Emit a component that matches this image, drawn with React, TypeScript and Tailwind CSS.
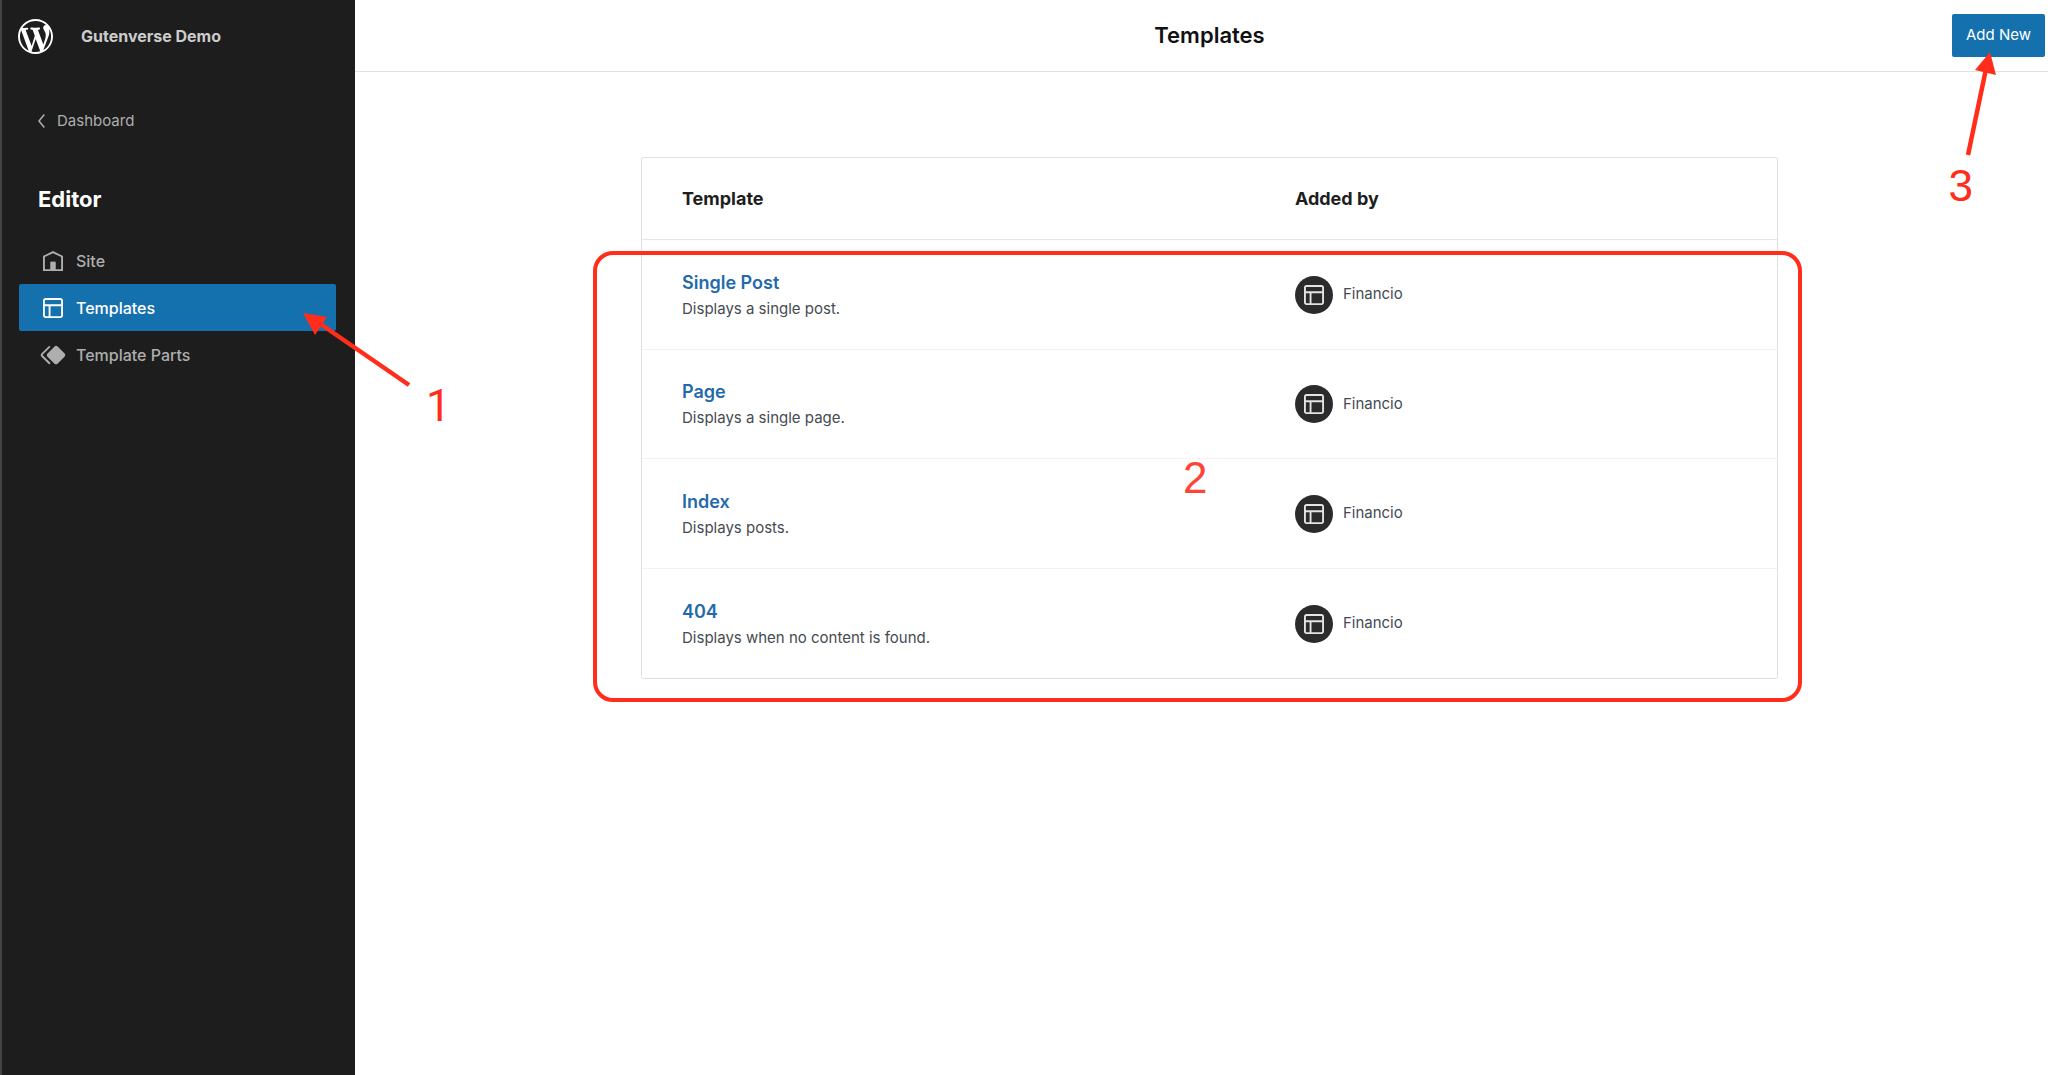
import type { ReactNode } from 'react';

const NAV_ITEMS = [
  { label: 'Site', icon: <HomeIcon />, active: false },
  { label: 'Templates', icon: <LayoutIcon />, active: true },
  { label: 'Template Parts', icon: <SymbolFilledIcon />, active: false },
];

const TEMPLATES = [
  { title: 'Single Post', description: 'Displays a single post.', addedBy: 'Financio' },
  { title: 'Page', description: 'Displays a single page.', addedBy: 'Financio' },
  { title: 'Index', description: 'Displays posts.', addedBy: 'Financio' },
  { title: '404', description: 'Displays when no content is found.', addedBy: 'Financio' },
];

function Icon({ children }: { children: ReactNode }) {
  return (
    <svg viewBox="0 0 24 24" className="w-[30px] h-[30px] shrink-0" fill="currentColor" aria-hidden="true">
      {children}
    </svg>
  );
}

function HomeIcon() {
  return (
    <Icon>
      <path d="M12 4L4 7.9V20h16V7.9L12 4zm6.5 14.5H14V13h-4v5.5H5.5V8.8L12 5.7l6.5 3.1v9.7z" />
      <path d="M10 12.5h4v6.5h-4z" />
    </Icon>
  );
}

function LayoutIcon() {
  return (
    <Icon>
      <path
        fillRule="evenodd"
        d="M18 4H6c-1.1 0-2 .9-2 2v12c0 1.1.9 2 2 2h12c1.1 0 2-.9 2-2V6c0-1.1-.9-2-2-2zM6 5.5h12c.3 0 .5.2.5.5v3h-13V6c0-.3.2-.5.5-.5zM5.5 10.5H8.5v8H6c-.3 0-.5-.2-.5-.5v-7.5zM10 18.5v-8h8.5V18c0 .3-.2.5-.5.5h-8z"
      />
    </Icon>
  );
}

function SymbolFilledIcon() {
  return (
    <Icon>
      <path d="M21.3 10.8l-5.6-5.6c-.7-.7-1.8-.7-2.5 0l-5.6 5.6c-.7.7-.7 1.8 0 2.5l5.6 5.6c.3.3.8.5 1.2.5s.9-.2 1.2-.5l5.6-5.6c.8-.7.8-1.9.1-2.5zm-17.6 1L10 5.5l-1-1-6.3 6.3c-.7.7-.7 1.8 0 2.5L9 19.5l1.1-1.1-6.3-6.3c-.2 0-.2-.2-.1-.3z" />
    </Icon>
  );
}

function WordPressLogo() {
  return (
    <svg viewBox="0 0 20 20" className="w-[35px] h-[35px] shrink-0 text-white" fill="currentColor" aria-hidden="true">
      <path d="M20 10c0-5.51-4.49-10-10-10C4.48 0 0 4.49 0 10c0 5.52 4.48 10 10 10 5.51 0 10-4.48 10-10zM7.78 15.37L4.37 6.22c.55-.02 1.17-.08 1.17-.08.5-.06.44-1.13-.06-1.11 0 0-1.45.11-2.37.11-.18 0-.37 0-.58-.01C4.12 2.69 6.87 1.11 10 1.11c2.33 0 4.45.87 6.05 2.34-.68-.11-1.65.39-1.65 1.58 0 .74.45 1.36.9 2.1.35.61.55 1.36.55 2.46 0 1.49-1.4 5-1.4 5l-3.03-8.37c.54-.02.82-.17.82-.17.5-.05.44-1.25-.06-1.22 0 0-1.44.12-2.38.12-.87 0-2.33-.12-2.33-.12-.5-.03-.56 1.2-.06 1.22l.92.08 1.26 3.41zM17.41 10c.24-.64.74-1.87.43-4.25.7 1.29 1.05 2.71 1.05 4.25 0 3.29-1.73 6.24-4.4 7.78.97-2.59 1.94-5.2 2.92-7.78zM6.1 18.09C3.12 16.65 1.11 13.53 1.11 10c0-1.3.23-2.48.72-3.59C3.25 10.3 4.67 14.2 6.1 18.09zm4.03-6.63l2.58 6.98c-.86.29-1.76.45-2.71.45-.79 0-1.57-.11-2.29-.33.81-2.38 1.62-4.74 2.42-7.1z" />
    </svg>
  );
}

function Sidebar() {
  return (
    <aside className="w-[355px] shrink-0 bg-[#1d1d1d] border-l-2 border-[#444444] text-[#aeaeae]">
      <div className="flex items-center gap-7 h-[72px] pl-4">
        <WordPressLogo />
        <span className="text-base font-bold text-[#cccccc]">Gutenverse Demo</span>
      </div>

      <a href="#dashboard" className="flex items-center gap-3 mt-[37px] pl-9 text-[15px] leading-6">
        <svg viewBox="0 0 7 14" className="w-[7px] h-[14px]" fill="none" stroke="currentColor" strokeWidth="1.5" aria-hidden="true">
          <path d="M6.3 .6L1 7l5.3 6.4" />
        </svg>
        Dashboard
      </a>

      <h2 className="mt-[50px] pl-9 text-[22px] leading-8 font-bold text-white">Editor</h2>

      <nav className="mt-[22px] pl-[17px] pr-[19px]">
        {NAV_ITEMS.map((item) => (
          <a
            key={item.label}
            href="#"
            aria-current={item.active ? 'page' : undefined}
            className={`flex items-center gap-2 h-[47px] pl-[19px] rounded-xs text-base font-medium ${
              item.active ? 'bg-[#1570ae] text-white' : ''
            }`}
          >
            {item.icon}
            {item.label}
          </a>
        ))}
      </nav>
    </aside>
  );
}

function TemplateTable() {
  return (
    <div className="relative w-full max-w-[1137px]">
      <table className="w-full table-fixed border-separate border-spacing-0 border border-[#e2e2e2] rounded-xs text-left">
        <thead>
          <tr className="h-[82px] text-lg text-[#1e1e1e]">
            <th scope="col" className="w-[54%] pl-10 font-bold border-b border-[#e6e6e6]">Template</th>
            <th scope="col" className="pl-10 font-bold border-b border-[#e6e6e6]">Added by</th>
          </tr>
        </thead>
        <tbody>
          {TEMPLATES.map((template) => (
            <tr key={template.title} className="group odd:h-[110px] even:h-[109px] text-[15px] text-[#454b50]">
              <td className="pl-10 border-b border-[#f2f2f2] group-last:border-b-0">
                <a href="#" className="block text-lg leading-7 font-semibold text-[#246aab]">{template.title}</a>
                <p className="leading-6">{template.description}</p>
              </td>
              <td className="pl-10 border-b border-[#f2f2f2] group-last:border-b-0">
                <div className="flex items-center gap-2.5">
                  <span className="flex items-center justify-center size-[38px] rounded-full bg-[#2b2b2b] text-[#e4e4e4]">
                    <LayoutIcon />
                  </span>
                  {template.addedBy}
                </div>
              </td>
            </tr>
          ))}
        </tbody>
      </table>

      {/* Callout 2: frame round the template rows */}
      <div className="absolute -left-12 -right-6 top-[94px] -bottom-[23px] border-4 border-[#ff2d1a] rounded-[20px] pointer-events-none" />
      <CalloutNumber className="left-[542px] top-[296px] text-[#ff4437] font-['Liberation_Sans',Arial,sans-serif]">2</CalloutNumber>
    </div>
  );
}

function CalloutNumber({ className, children }: { className: string; children: ReactNode }) {
  return (
    <span className={`absolute text-[44px] leading-[50px] pointer-events-none ${className}`}>
      {children}
    </span>
  );
}

export default function App() {
  return (
    <div className="relative flex min-h-screen bg-white font-[Inter,sans-serif] overflow-hidden">
      <Sidebar />

      <div className="flex-1 min-w-0">
        <header className="grid grid-cols-[1fr_auto_1fr] items-center h-[72px] pl-4 border-b border-[#e0e0e0]">
          <h1 className="col-start-2 text-[22px] font-semibold text-[#111111]">Templates</h1>
          <button
            type="button"
            className="justify-self-end h-[43px] px-3.5 mr-[3px] rounded-xs bg-[#1570ae] text-[15px] text-white"
          >
            Add New
          </button>
        </header>

        <main className="flex justify-center pl-4 pt-[85px]">
          <TemplateTable />
        </main>
      </div>

      {/* Callout 1: arrow to the active menu item */}
      <svg viewBox="0 0 110 78" className="absolute left-[301px] top-[311px] w-[110px] h-[78px] pointer-events-none" fill="#ff2d1a" aria-hidden="true">
        <path d="M18 12L108 74" stroke="#ff2d1a" strokeWidth="4.5" />
        <path d="M2 2l24 4-12 18z" />
      </svg>
      <CalloutNumber className="left-[426px] top-[381px] text-[#ff2d1a] font-[Roboto,sans-serif]">1</CalloutNumber>

      {/* Callout 3: arrow to the add button */}
      <svg viewBox="0 0 34 106" className="absolute right-[50px] top-[51px] w-[34px] h-[106px] pointer-events-none" fill="#ff2d1a" aria-hidden="true">
        <path d="M22 18L4 104" stroke="#ff2d1a" strokeWidth="4.5" />
        <path d="M26 1L11 19l21 5z" />
      </svg>
      <CalloutNumber className="right-[75px] top-[161px] text-[#ff2d1a] font-['Liberation_Sans',Arial,sans-serif]">3</CalloutNumber>
    </div>
  );
}
